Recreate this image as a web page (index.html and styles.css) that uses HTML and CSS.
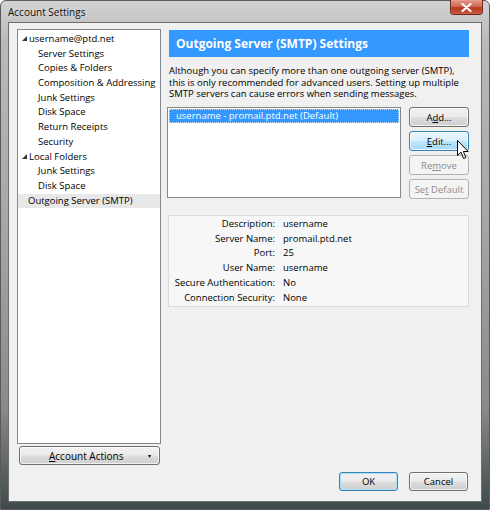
FILE: index.html
```html
<!DOCTYPE html>
<html lang="en">

<head>
    <title>Account Settings</title>
    <link rel="stylesheet" href="styles.css">
</head>

<body>
    <div class="window">
        <div class="titlebar">
            <span class="title">Account Settings</span>
            <button class="close" title="Close">
                <svg width="11" height="9" viewBox="0 0 11 9">
                    <path d="M1.5 1 L9.5 8 M9.5 1 L1.5 8" stroke="#fff" stroke-width="2.2" stroke-linecap="round" />
                </svg>
            </button>
        </div>

        <div class="client">
            <!-- account tree -->
            <div class="sidebar">
                <ul class="tree">
                    <li class="node root"><span class="twisty"></span>username@ptd.net</li>
                    <li class="node child">Server Settings</li>
                    <li class="node child">Copies &amp; Folders</li>
                    <li class="node child">Composition &amp; Addressing</li>
                    <li class="node child">Junk Settings</li>
                    <li class="node child">Disk Space</li>
                    <li class="node child">Return Receipts</li>
                    <li class="node child">Security</li>
                    <li class="node root"><span class="twisty"></span>Local Folders</li>
                    <li class="node child">Junk Settings</li>
                    <li class="node child">Disk Space</li>
                    <li class="node leaf current">Outgoing Server (SMTP)</li>
                </ul>
                <button class="btn menu-btn"><span><u>A</u>ccount Actions</span><span class="drop">&#9662;</span></button>
            </div>

            <div class="panel">
                <h1 class="heading">Outgoing Server (SMTP) Settings</h1>
                <p class="desc">Although you can specify more than one outgoing server (SMTP), this is only recommended for advanced users. Setting up multiple SMTP servers can cause errors when sending messages.</p>

                <div class="servers">
                    <ul class="server-list">
                        <li class="selected">username - promail.ptd.net (Default)</li>
                    </ul>
                    <div class="server-buttons">
                        <button class="btn">A<u>d</u>d...</button>
                        <button class="btn hover"><u>E</u>dit...</button>
                        <button class="btn" disabled>Re<u>m</u>ove</button>
                        <button class="btn" disabled>Se<u>t</u> Default</button>
                    </div>
                </div>

                <dl class="details">
                    <dt>Description:</dt>
                    <dd>username</dd>
                    <dt>Server Name:</dt>
                    <dd>promail.ptd.net</dd>
                    <dt>Port:</dt>
                    <dd>25</dd>
                    <dt>User Name:</dt>
                    <dd>username</dd>
                    <dt>Secure Authentication:</dt>
                    <dd>No</dd>
                    <dt>Connection Security:</dt>
                    <dd>None</dd>
                </dl>

                <div class="footer">
                    <button class="btn default">OK</button>
                    <button class="btn">Cancel</button>
                </div>
            </div>
        </div>

        <!-- mouse pointer resting on Edit -->
        <svg class="cursor" width="13" height="20" viewBox="0 0 13 20">
            <path d="M0.5 0.5 L0.5 15.5 L4 12.2 L6.6 18.5 L8.9 17.5 L6.4 11.5 L11.2 11.5 Z" fill="#fff" stroke="#000" stroke-width="1" stroke-linejoin="round" />
        </svg>
    </div>
</body>

</html>
```

FILE: styles.css
```css
* {
    box-sizing: border-box;
}

body {
    margin: 0;
    padding: 0;
    width: 490px;
    height: 510px;
    overflow: hidden;
    font-family: 'Open Sans', 'Noto Sans', Arial, sans-serif;
    font-size: 9.5px;
    color: #000;
}

/* Window frame */
.window {
    position: relative;
    height: 510px;
    display: flex;
    flex-direction: column;
    padding: 0 7px 7px 7px;
    background: linear-gradient(180deg, #d2d2d2 0%, #b9b9b9 8%, #a9a9a9 40%, #8a8a8a 80%, #3f4a4c 100%);
    border: 1px solid #5a5a5a;
    border-radius: 6px 6px 0 0;
}

.titlebar {
    height: 21px;
    display: flex;
    justify-content: space-between;
    align-items: flex-start;
}

.title {
    line-height: 22px;
    font-size: 10px;
    color: #111;
    text-shadow: 0 0 6px rgba(255, 255, 255, 0.7);
}

.close {
    width: 33px;
    height: 15px;
    margin-top: -1px;
    margin-right: -1px;
    padding: 0;
    display: flex;
    align-items: center;
    justify-content: center;
    border: 1px solid #6b2a20;
    border-top: none;
    border-radius: 0 0 4px 4px;
    background: linear-gradient(180deg, #e49a8a 0%, #d36a56 45%, #b83820 55%, #c9563a 100%);
    box-shadow: inset 0 0 1px #f7c9bd;
}

/* Client area */
.client {
    flex: 1;
    display: flex;
    background: #f0f0f0;
    border: 1px solid #6d6d6d;
    padding: 6px 12px 10px 8px;
}

.sidebar {
    width: 146px;
    display: flex;
    flex-direction: column;
}

.tree {
    list-style: none;
    margin: 0;
    padding: 2px 0 0 0;
    height: 415px;
    background: #fff;
    border: 1px solid #828790;
}

.node {
    height: 14.7px;
    line-height: 14.7px;
    white-space: nowrap;
}

.root {
    padding-left: 4px;
}

.child {
    padding-left: 20px;
}

.leaf {
    padding-left: 10px;
}

.current {
    background: #e8e8e8;
    height: 14px;
    margin-top: 0;
}

.twisty {
    display: inline-block;
    width: 0;
    height: 0;
    margin-right: 2px;
    vertical-align: 1px;
    border-left: 5px solid transparent;
    border-bottom: 5px solid #333;
}

/* Buttons */
.btn {
    height: 20px;
    padding: 0;
    font-family: inherit;
    font-size: 9.5px;
    color: #000;
    border: 1px solid #707070;
    border-radius: 3px;
    background: linear-gradient(180deg, #f2f2f2 0%, #ebebeb 48%, #dddddd 52%, #cfcfcf 100%);
    box-shadow: inset 0 0 0 1px rgba(255, 255, 255, 0.7);
}

.btn.hover {
    border-color: #3c7fb1;
    background: linear-gradient(180deg, #eaf6fd 0%, #d9f0fc 48%, #bee6fd 52%, #a7d9f5 100%);
}

.btn:disabled {
    color: #8d8d8d;
    border-color: #adb2b5;
    background: #f4f4f4;
    box-shadow: none;
}

.btn.default {
    border-color: #3c7fb1;
    box-shadow: inset 0 0 0 1px #a9e0fb;
}

.menu-btn {
    margin: 2px 1px 0 2px;
    height: 19px;
    display: flex;
    align-items: center;
    justify-content: space-between;
    padding: 0 8px 0 29px;
    font-size: 10px;
}

.drop {
    font-size: 6px;
}

/* Right hand panel */
.panel {
    flex: 1;
    margin-left: 6px;
    display: flex;
    flex-direction: column;
}

.heading {
    margin: 1px 0 0 2px;
    height: 27px;
    padding-left: 7px;
    line-height: 27px;
    font-size: 12px;
    font-weight: bold;
    color: #fff;
    background: #3399ff;
}

.desc {
    margin: 8px 0 0 2px;
    line-height: 11.7px;
    padding-right: 2px;
}

.servers {
    display: flex;
    margin-top: 7px;
}

.server-list {
    list-style: none;
    margin: 0;
    padding: 1px;
    width: 234px;
    height: 91px;
    background: #fff;
    border: 1px solid #828790;
}

.server-list li {
    height: 14px;
    line-height: 13px;
    padding-left: 7px;
}

.server-list .selected {
    color: #fff;
    background: #3399ff;
    outline: 1px dotted #cde;
    outline-offset: -1px;
}

.server-buttons {
    margin-left: 8px;
    width: 60px;
    display: flex;
    flex-direction: column;
    gap: 4px;
}

.server-buttons .btn {
    height: 20px;
}

.details {
    margin: 16px 0 0 1px;
    height: 92px;
    display: grid;
    grid-template-columns: 106px 1fr;
    column-gap: 8px;
    align-content: start;
    padding-top: 1px;
    background: #f7f7f7;
    border: 1px solid #dcdcdc;
}

.details dt,
.details dd {
    margin: 0;
    height: 14.7px;
    line-height: 14.7px;
    white-space: nowrap;
}

.details dt {
    text-align: right;
}

.footer {
    margin-top: auto;
    display: flex;
    justify-content: flex-end;
    gap: 11px;
    padding-right: 1px;
}

.footer .btn {
    width: 59px;
    height: 19px;
}

.cursor {
    position: absolute;
    left: 456px;
    top: 139px;
}
```
